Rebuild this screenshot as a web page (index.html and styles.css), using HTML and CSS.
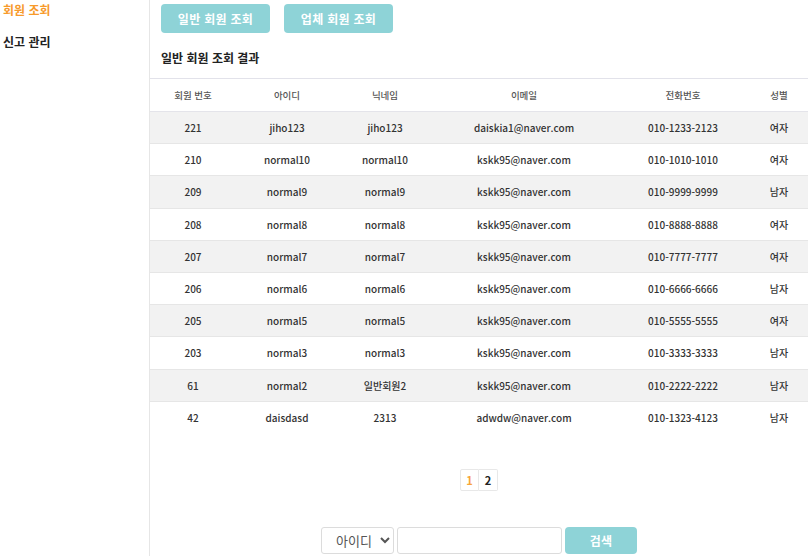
FILE: index.html
```html
<!DOCTYPE html>
<html lang="ko">
<head>
<meta charset="utf-8">
<title>회원 조회</title>
<link rel="stylesheet" href="styles.css">
</head>
<body>
<div class="layout">
  <nav class="sidebar">
    <a class="nav-item active">회원 조회</a>
    <a class="nav-item">신고 관리</a>
  </nav>
  <main class="content">
    <div class="tabs">
      <button class="btn tab">일반 회원 조회</button>
      <button class="btn tab">업체 회원 조회</button>
    </div>
    <h2 class="title">일반 회원 조회 결과</h2>
    <table class="members">
      <colgroup>
        <col class="c1"><col class="c2"><col class="c3"><col class="c4"><col class="c5"><col class="c6">
      </colgroup>
      <thead>
        <tr><th>회원 번호</th><th>아이디</th><th>닉네임</th><th>이메일</th><th>전화번호</th><th>성별</th></tr>
      </thead>
      <tbody>
        <tr><td>221</td><td>jiho123</td><td>jiho123</td><td>daiskia1@naver.com</td><td>010-1233-2123</td><td>여자</td></tr>
        <tr><td>210</td><td>normal10</td><td>normal10</td><td>kskk95@naver.com</td><td>010-1010-1010</td><td>여자</td></tr>
        <tr><td>209</td><td>normal9</td><td>normal9</td><td>kskk95@naver.com</td><td>010-9999-9999</td><td>남자</td></tr>
        <tr><td>208</td><td>normal8</td><td>normal8</td><td>kskk95@naver.com</td><td>010-8888-8888</td><td>여자</td></tr>
        <tr><td>207</td><td>normal7</td><td>normal7</td><td>kskk95@naver.com</td><td>010-7777-7777</td><td>여자</td></tr>
        <tr><td>206</td><td>normal6</td><td>normal6</td><td>kskk95@naver.com</td><td>010-6666-6666</td><td>남자</td></tr>
        <tr><td>205</td><td>normal5</td><td>normal5</td><td>kskk95@naver.com</td><td>010-5555-5555</td><td>여자</td></tr>
        <tr><td>203</td><td>normal3</td><td>normal3</td><td>kskk95@naver.com</td><td>010-3333-3333</td><td>남자</td></tr>
        <tr><td>61</td><td>normal2</td><td>일반회원2</td><td>kskk95@naver.com</td><td>010-2222-2222</td><td>남자</td></tr>
        <tr><td>42</td><td>daisdasd</td><td>2313</td><td>adwdw@naver.com</td><td>010-1323-4123</td><td>남자</td></tr>
      </tbody>
    </table>
    <div class="pager">
      <a class="page current">1</a><a class="page">2</a>
    </div>
    <form class="search">
      <select class="field select"><option>아이디</option></select>
      <input class="field input" type="text">
      <button type="button" class="btn search-btn">검색</button>
    </form>
  </main>
</div>
</body>
</html>
```

FILE: styles.css
```css
* { box-sizing: border-box; }
html, body { margin: 0; padding: 0; background: #fff; }
body {
  font-family: "Noto Sans CJK KR", "Noto Sans", sans-serif;
  color: #333;
  overflow: hidden;
}
.layout {
  display: flex;
  height: 556px;
}
.sidebar {
  width: 150px;
  flex: none;
  border-right: 1px solid #e6e6e6;
  padding: 0 0 0 3px;
  display: flex;
  flex-direction: column;
}
.nav-item {
  display: block;
  font-size: 12px;
  font-weight: 700;
  line-height: 20px;
  height: 32px;
  color: #222;
}
.nav-item.active { color: #f79a2b; }
.content {
  width: 658px;
  flex: none;
  display: flex;
  flex-direction: column;
}
.tabs {
  display: flex;
  gap: 14px;
  padding: 4px 0 0 11px;
}
.btn {
  border: none;
  border-radius: 4px;
  background: #8ed3d7;
  color: #fff;
  font-family: inherit;
  font-weight: 700;
  font-size: 12px;
  padding: 0;
  letter-spacing: 0.3px;
}
.tab {
  width: 109px;
  height: 29px;
}
.title {
  margin: 15px 0 0;
  padding: 0 0 0 11px;
  font-size: 12px;
  font-weight: 700;
  color: #222;
  line-height: 20px;
  height: 30px;
}
.members {
  width: 658px;
  border-collapse: collapse;
  table-layout: fixed;
  font-size: 10px;
  border-top: 1px solid #e2e2ea;
}
.c1 { width: 86px; }
.c2 { width: 102px; }
.c3 { width: 94px; }
.c4 { width: 184px; }
.c5 { width: 134px; }
.c6 { width: 58px; }
.members th {
  height: 33px;
  font-weight: 500;
  font-size: 9.5px;
  color: #555;
  text-align: center;
  border-bottom: 1px solid #e4e4ea;
}
.members td {
  height: 32.2px;
  text-align: center;
  font-weight: 500;
  color: #333;
  border-bottom: 1px solid #e6e6e6;
  padding: 0;
}
.members tbody tr:nth-child(odd) { background: #f2f2f2; }
.members tbody tr:last-child td { border-bottom: none; }
.pager {
  display: flex;
  justify-content: center;
  margin-top: 36px;
}
.page {
  display: flex;
  align-items: center;
  justify-content: center;
  width: 19px;
  height: 22px;
  font-size: 11px;
  font-weight: 600;
  color: #222;
  border: 1px solid #e8e8e8;
}
.page + .page { border-left: none; }
.page:first-child { border-radius: 2px 0 0 2px; }
.page:last-child { border-radius: 0 2px 2px 0; }
.page.current { color: #f7a43a; }
.search {
  display: flex;
  justify-content: center;
  gap: 3px;
  margin: 36px 0 0;
}
.field {
  height: 27px;
  border: 1px solid #dcdcdc;
  border-radius: 3px;
  background: #fff;
  font-family: inherit;
}
.select {
  width: 73px;
  font-size: 13px;
  color: #555;
  padding: 0 6px 0 10px;
}
.input { width: 165px; }
.search-btn {
  width: 72px;
  height: 27px;
  font-size: 12px;
}
```
